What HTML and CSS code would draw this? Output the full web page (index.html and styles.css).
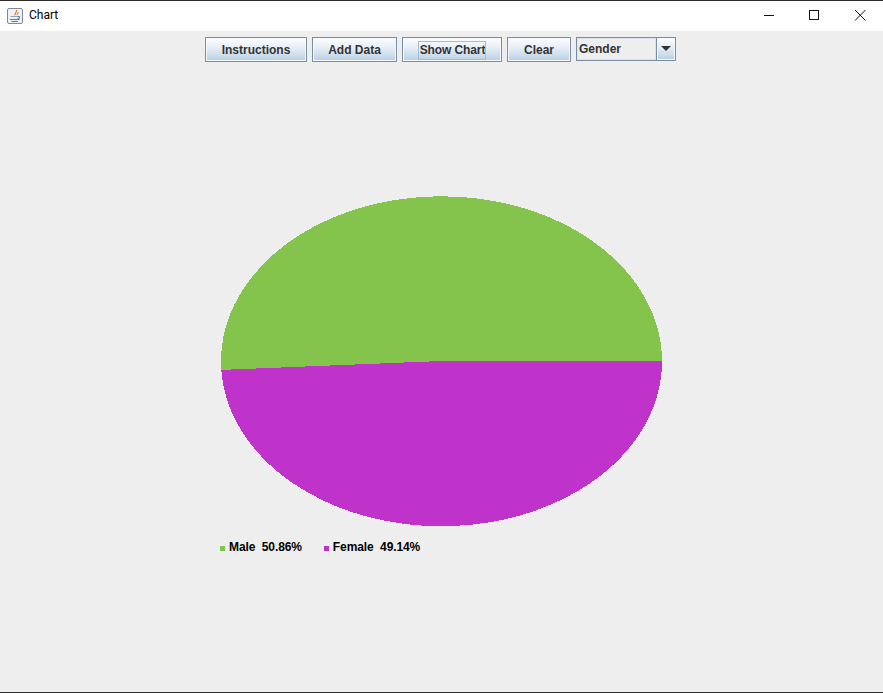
FILE: index.html
```html
<!DOCTYPE html>
<html lang="en">
<head>
  <meta charset="UTF-8">
  <title>Chart</title>
  <link rel="stylesheet" href="styles.css">
</head>
<body>
  <div class="window">
    <div class="titlebar">
      <svg class="app-icon" width="16" height="16" viewBox="0 0 16 16">
        <rect x="0.5" y="0.5" width="15" height="15" rx="1.5" fill="#eef1f5" stroke="#7d8a99"/>
        <path d="M9.500 2c1.200 1.800-2.600 2.800-1.400 5.200M11 4.200c.6 1-1.100 1.500-.7 2.800" fill="none" stroke="#e2762a" stroke-width="1.200"/>
        <path d="M3.500 8.500h7" stroke="#8fa6bd" fill="none"/>
        <path d="M10.500 8.500h2v1.800h-2M3 11.500h9.500M4.500 13.500h6.500" fill="none" stroke="#4f7ba6"/>
      </svg>
      <span class="title">Chart</span>
      <div class="win-controls">
        <svg class="win-btn" width="46" height="30" viewBox="0 0 46 30">
          <path d="M19 14.500h10" stroke="#111" fill="none"/>
        </svg>
        <svg class="win-btn" width="46" height="30" viewBox="0 0 46 30">
          <rect x="18.500" y="9.500" width="9" height="9" stroke="#111" fill="none"/>
        </svg>
        <svg class="win-btn" width="46" height="30" viewBox="0 0 46 30">
          <path d="M18 9l10.500 10.500M28.500 9l-10.500 10.500" stroke="#111" fill="none"/>
        </svg>
      </div>
    </div>

    <div class="content">
      <div class="toolbar">
        <button class="btn btn-instructions">Instructions</button>
        <button class="btn btn-add">Add Data</button>
        <button class="btn btn-show"><span class="focus">Show Chart</span></button>
        <button class="btn btn-clear">Clear</button>
        <div class="combo">
          <span class="combo-value">Gender</span>
          <span class="combo-arrow"></span>
        </div>
      </div>

      <div class="chart">
        <svg class="pie" width="442" height="331" viewBox="0 0 442 331" shape-rendering="crispEdges">
          <path d="M220.500 165 L441 165 A220.500 165 0 1 0 0.300 173.900 Z" fill="#84c44c"/>
          <path d="M220.500 165 L0.300 173.900 A220.500 165 0 0 0 441 165 Z" fill="#bf33cb"/>
        </svg>
        <div class="legend">
          <span class="legend-item"><i class="swatch swatch-male"></i>Male&nbsp; 50.86%</span>
          <span class="legend-item"><i class="swatch swatch-female"></i>Female&nbsp; 49.14%</span>
        </div>
      </div>
    </div>
  </div>
</body>
</html>
```

FILE: styles.css
```css
* { box-sizing: border-box; }
html, body {
  margin: 0;
  height: 100%;
  overflow: hidden;
}
.window {
  width: 883px;
  height: 693px;
  display: flex;
  flex-direction: column;
  background: #eeeeee;
  border-top: 1px solid #2b2b2b;
  border-bottom: 1px solid #2b2b2b;
}
.titlebar {
  height: 30px;
  background: #fff;
  display: flex;
  align-items: center;
  padding-left: 7px;
}
.app-icon { margin-top: -1px; }
.title {
  font-family: Roboto, "Noto Sans", sans-serif;
  font-size: 12px;
  color: #000;
  margin-left: 6px;
  margin-bottom: 2px;
}
.win-controls {
  margin-left: auto;
  display: flex;
}
.content {
  flex: 1;
  display: flex;
  flex-direction: column;
  align-items: center;
}
.toolbar {
  display: flex;
  gap: 5px;
  margin-top: 6px;
  margin-right: 2px;
  align-items: flex-start;
}
.btn {
  height: 25px;
  padding: 0;
  border: 1px solid #7b8fa3;
  box-shadow: inset 0 0 0 1px #f4f8fb;
  background: linear-gradient(#fdfefe, #e4edf5 45%, #b8cfe5);
  font-family: "Liberation Sans", Arial, sans-serif;
  font-size: 12px;
  font-weight: bold;
  color: #333;
}
.btn-instructions { width: 102px; }
.btn-add { width: 85px; }
.btn-show { width: 100px; }
.btn-clear { width: 64px; }
.focus {
  display: inline-block;
  margin-top: 1px;
  padding: 1px 0 1px 1px;
  outline: 1px solid #a3bdd4;
  line-height: 15px;
  letter-spacing: -0.1px;
}
.combo {
  width: 100px;
  height: 24px;
  display: flex;
  border: 1px solid #7b8fa3;
  background: #eeeeee;
  font-family: "Liberation Sans", Arial, sans-serif;
  font-size: 12px;
  font-weight: bold;
  color: #333;
}
.combo-value {
  flex: 1;
  padding-left: 1px;
  line-height: 20px;
  border: 1px solid #dce3ea;
}
.combo-arrow {
  width: 19px;
  border-left: 1px solid #7b8fa3;
  box-shadow: inset 0 0 0 1px #f4f8fb;
  background: linear-gradient(#fdfefe, #e4edf5 45%, #b8cfe5);
  position: relative;
}
.combo-arrow::after {
  content: "";
  position: absolute;
  left: 4px;
  top: 8px;
  border-left: 5px solid transparent;
  border-right: 5px solid transparent;
  border-top: 5px solid #333;
}
.chart {
  align-self: flex-start;
  margin-left: 221px;
  margin-top: 134px;
}
.pie { display: block; }
.legend {
  display: flex;
  gap: 22px;
  margin-top: 13px;
  margin-left: -1px;
  font-family: "Liberation Sans", Arial, sans-serif;
  font-size: 12px;
  font-weight: bold;
  letter-spacing: -0.1px;
  color: #000;
}
.legend-item {
  display: flex;
  align-items: center;
}
.swatch {
  width: 5px;
  height: 5px;
  margin-right: 4px;
  margin-top: 2px;
}
.swatch-male { background: #84c44c; }
.swatch-female { background: #bf33cb; }
```
